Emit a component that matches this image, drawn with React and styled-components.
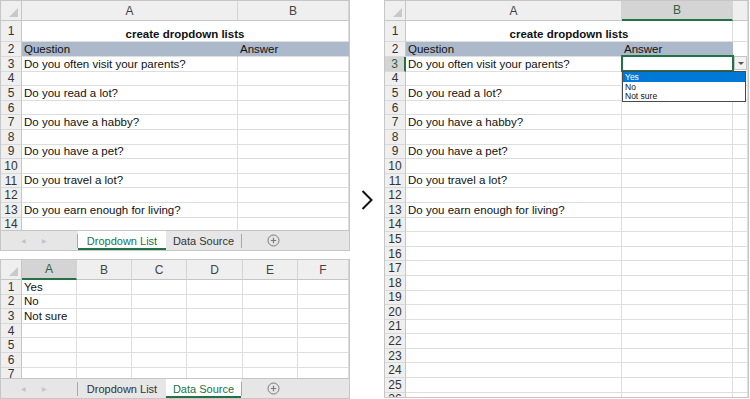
import React from 'react';
import styled, { createGlobalStyle, css } from 'styled-components';

const GlobalStyle = createGlobalStyle`
  body {
    margin: 0;
    background: #ffffff;
    font-family: "Liberation Sans", Arial, sans-serif;
  }
`;

const GREEN = '#217346';

const Page = styled.div`
  width: 750px;
  height: 399px;
  display: flex;
  align-items: flex-start;
`;

const LeftColumn = styled.div`
  display: flex;
  flex-direction: column;
  gap: 8px;
  width: 350px;
`;

const ArrowSlot = styled.div`
  width: 34px;
  height: 399px;
  display: flex;
  align-items: center;
  justify-content: center;
`;

const Frame = styled.div`
  position: relative;
  width: ${p => p.$w}px;
  height: ${p => p.$h}px;
  border: 1px solid #c6c6c6;
  box-sizing: border-box;
  display: flex;
  flex-direction: column;
  overflow: hidden;
  background: #fff;
`;

const Grid = styled.div`
  flex: 1;
  min-height: 0;
  overflow: hidden;
  display: grid;
  align-content: start;
  grid-template-columns: ${p => p.$cols};
  grid-template-rows: ${p => p.$rows};
`;

const headBase = css`
  background: #efefef;
  box-sizing: border-box;
  display: flex;
  align-items: center;
  justify-content: center;
  color: #444;
  font-size: 12px;
`;

const Corner = styled.div`
  ${headBase};
  position: relative;
  border-right: 1px solid #c6c6c6;
  border-bottom: 1px solid #c6c6c6;
  &::after {
    content: '';
    position: absolute;
    right: 3px;
    bottom: 3px;
    border-left: 9px solid transparent;
    border-bottom: 9px solid #c9c9c9;
  }
`;

const ColHead = styled.div`
  ${headBase};
  border-right: 1px solid #d4d4d4;
  border-bottom: 1px solid #c6c6c6;
  ${p => p.$sel && css`
    background: #d4d4d4;
    color: #2f5f3f;
    border-bottom: 2px solid ${GREEN};
  `}
`;

const RowHead = styled.div`
  ${headBase};
  border-right: 1px solid #c6c6c6;
  border-bottom: 1px solid #d9d9d9;
  font-size: 12px;
  color: #333;
  ${p => p.$sel && css`
    background: #d4d4d4;
    color: #2f5f3f;
    border-right: 2px solid ${GREEN};
  `}
`;

const Cell = styled.div`
  box-sizing: border-box;
  border-right: 1px solid #dedede;
  border-bottom: 1px solid #dedede;
  background: ${p => p.$fill || '#fff'};
  grid-column: span ${p => p.$span || 1};
  display: flex;
  align-items: flex-end;
  justify-content: ${p => (p.$center ? 'center' : 'flex-start')};
  padding: 0 2px 1px;
  font-size: 11.5px;
  font-weight: ${p => (p.$bold ? 700 : 400)};
  color: #111;
  white-space: nowrap;
  overflow: visible;
  ${p => p.$fill && css`border-right-color: ${p.$fill};`}
`;

const TabBar = styled.div`
  height: 19px;
  flex: none;
  display: flex;
  align-items: stretch;
  background: #e6e6e6;
  border-top: 1px solid #c6c6c6;
  font-size: 11px;
`;

const NavArrows = styled.div`
  width: 76px;
  display: flex;
  align-items: center;
  gap: 16px;
  padding-left: 20px;
  box-sizing: border-box;
  color: #c4c4c4;
  font-size: 6px;
`;

const Sep = styled.div`
  width: 1px;
  margin: 3px 0 2px;
  background: #a8a8a8;
`;

const Tab = styled.div`
  width: ${p => p.$w}px;
  display: flex;
  align-items: center;
  justify-content: center;
  box-sizing: border-box;
  color: #333;
  ${p => p.$active && css`
    background: #fff;
    color: ${GREEN};
    border-bottom: 2px solid ${GREEN};
    padding-top: 2px;
  `}
`;

const AddSheet = styled.div`
  width: 62px;
  display: flex;
  align-items: center;
  justify-content: center;
`;

const ActiveCell = styled.div`
  position: absolute;
  left: 236px;
  top: 54px;
  width: 113px;
  height: 17px;
  border: 2px solid ${GREEN};
  box-sizing: border-box;
`;

const DropButton = styled.div`
  position: absolute;
  left: 349px;
  top: 55px;
  width: 13px;
  height: 14px;
  box-sizing: border-box;
  background: #f2f2f2;
  border: 1px solid #c6c6c6;
  display: flex;
  align-items: center;
  justify-content: center;
  &::after {
    content: '';
    border-left: 3px solid transparent;
    border-right: 3px solid transparent;
    border-top: 3px solid #555;
  }
`;

const DropList = styled.div`
  position: absolute;
  left: 237px;
  top: 70px;
  width: 124px;
  box-sizing: border-box;
  border: 1px solid #4a4a4a;
  background: #fff;
  font-size: 8.5px;
`;

const DropItem = styled.div`
  height: 9.6px;
  line-height: 10px;
  padding-left: 2px;
  color: ${p => (p.$hl ? '#fff' : '#111')};
  background: ${p => (p.$hl ? '#0078d7' : 'transparent')};
`;

const title = [{ text: 'create dropdown lists', span: 2, bold: true, center: true }];
const header = [
  { text: 'Question', fill: '#acb9ca' },
  { text: 'Answer', fill: '#acb9ca' },
];
const questions = {
  3: 'Do you often visit your parents?',
  5: 'Do you read a lot?',
  7: 'Do you have a habby?',
  9: 'Do you have a pet?',
  11: 'Do you travel a lot?',
  13: 'Do you earn enough for living?',
};

const questionRows = count => {
  const rows = [
    { h: 21, cells: title },
    { h: 15, cells: header },
  ];
  for (let n = 3; n <= count; n++) {
    rows.push({ h: 14.6, cells: questions[n] ? [{ text: questions[n] }] : [] });
  }
  return rows;
};

const sourceRows = ['Yes', 'No', 'Not sure', '', '', '', '', ''].map(t => ({
  h: 14.6,
  cells: t ? [{ text: t }] : [],
}));

const fillCells = (cells, total) => {
  const out = [...cells];
  let used = cells.reduce((s, c) => s + (c.span || 1), 0);
  while (used < total) {
    out.push({});
    used++;
  }
  return out;
};

const Sheet = ({ widths, letters, rows, selCol, selRow }) => (
  <Grid
    $cols={widths.map(w => w + 'px').join(' ')}
    $rows={['20px', ...rows.map(r => r.h + 'px')].join(' ')}
  >
    <Corner />
    {letters.map((l, i) => (
      <ColHead key={i} $sel={i === selCol}>{l}</ColHead>
    ))}
    {rows.map((r, ri) => (
      <React.Fragment key={ri}>
        <RowHead $sel={ri + 1 === selRow}>{ri + 1}</RowHead>
        {fillCells(r.cells, letters.length).map((c, ci) => (
          <Cell key={ci} $span={c.span} $bold={c.bold} $center={c.center} $fill={c.fill}>
            {c.text}
          </Cell>
        ))}
      </React.Fragment>
    ))}
  </Grid>
);

const PlusIcon = () => (
  <svg width="13" height="13" viewBox="0 0 13 13">
    <circle cx="6.5" cy="6.5" r="5.5" fill="none" stroke="#7a7a7a" strokeWidth="1" />
    <path d="M6.5 3.8v5.4M3.8 6.5h5.4" stroke="#7a7a7a" strokeWidth="1.2" />
  </svg>
);

const Tabs = ({ active }) => (
  <TabBar>
    <NavArrows>
      <span>◀</span>
      <span>▶</span>
    </NavArrows>
    <Sep />
    <Tab $w={88} $active={active === 0}>Dropdown List</Tab>
    <Tab $w={75} $active={active === 1}>Data Source</Tab>
    <Sep />
    <AddSheet><PlusIcon /></AddSheet>
  </TabBar>
);

const Chevron = () => (
  <svg width="14" height="22" viewBox="0 0 14 22">
    <path d="M2.5 2 L11.5 11 L2.5 20" fill="none" stroke="#111" strokeWidth="2" />
  </svg>
);

export default function App() {
  return (
    <>
      <GlobalStyle />
      <Page>
        <LeftColumn>
          <Frame $w={350} $h={251}>
            <Sheet widths={[21, 216, 111]} letters={['A', 'B']} rows={questionRows(14)} />
            <Tabs active={0} />
          </Frame>
          <Frame $w={350} $h={140}>
            <Sheet
              widths={[21, 55, 55, 55, 56, 55, 51]}
              letters={['A', 'B', 'C', 'D', 'E', 'F']}
              rows={sourceRows}
              selCol={0}
            />
            <Tabs active={1} />
          </Frame>
        </LeftColumn>
        <ArrowSlot>
          <Chevron />
        </ArrowSlot>
        <Frame $w={365} $h={398}>
          <Sheet
            widths={[21, 216, 111, 15]}
            letters={['A', 'B', '']}
            rows={questionRows(27)}
            selCol={1}
            selRow={3}
          />
          <ActiveCell />
          <DropButton />
          <DropList>
            <DropItem $hl>Yes</DropItem>
            <DropItem>No</DropItem>
            <DropItem>Not sure</DropItem>
          </DropList>
        </Frame>
      </Page>
    </>
  );
}
